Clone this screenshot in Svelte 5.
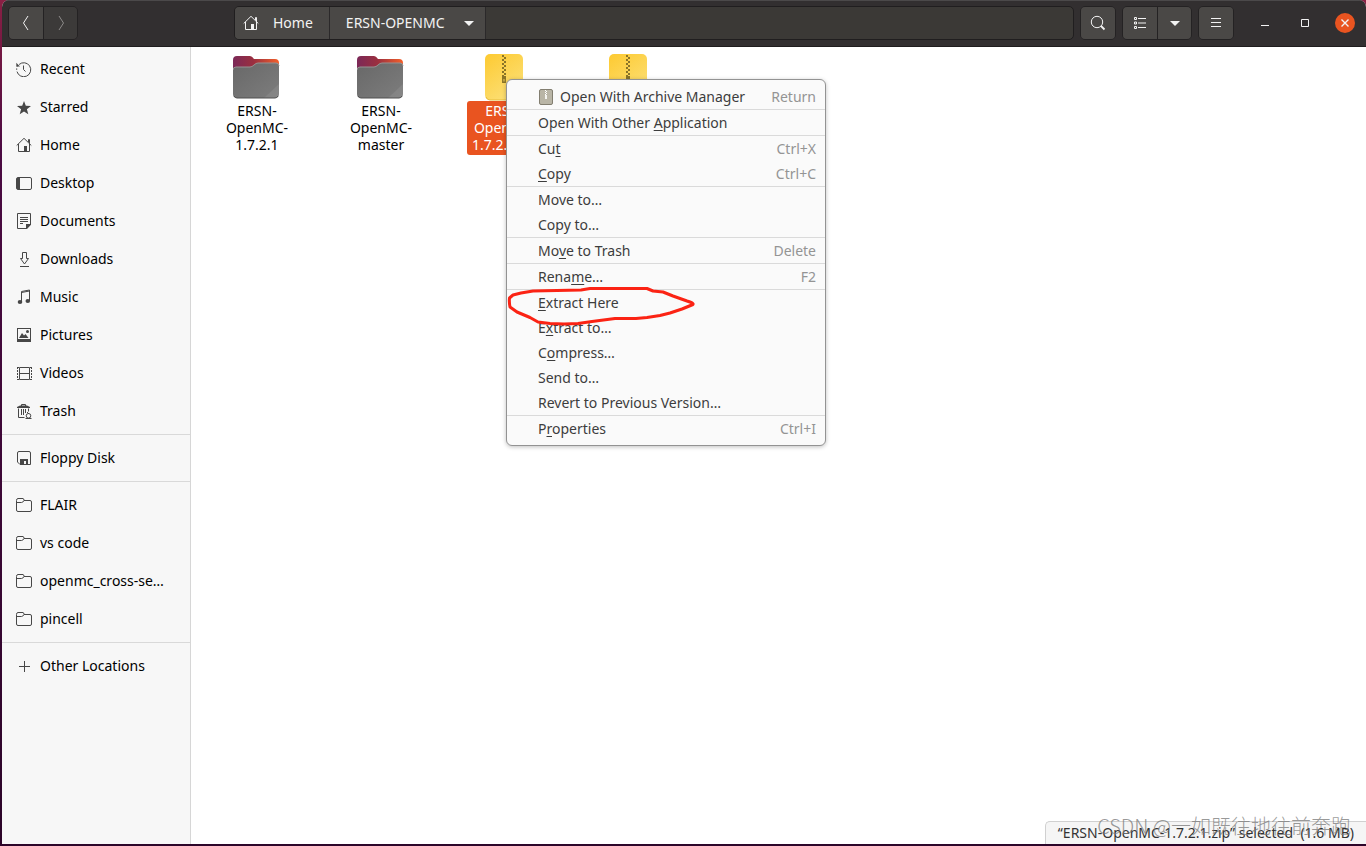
<script lang="ts">
  interface Place {
    label: string;
    icon: string;
  }

  interface FileEntry {
    lines: string[];
    kind: "folder" | "zip";
  }

  interface MenuEntry {
    before: string;
    key?: string;
    after?: string;
    accel?: string;
    icon?: boolean;
  }

  const places: Place[][] = [
    [
      { label: "Recent", icon: "recent" },
      { label: "Starred", icon: "star" },
      { label: "Home", icon: "home" },
      { label: "Desktop", icon: "desktop" },
      { label: "Documents", icon: "document" },
      { label: "Downloads", icon: "download" },
      { label: "Music", icon: "music" },
      { label: "Pictures", icon: "picture" },
      { label: "Videos", icon: "video" },
      { label: "Trash", icon: "trash" },
    ],
    [{ label: "Floppy Disk", icon: "floppy" }],
    [
      { label: "FLAIR", icon: "folder" },
      { label: "vs code", icon: "folder" },
      { label: "openmc_cross-se…", icon: "folder" },
      { label: "pincell", icon: "folder" },
    ],
    [{ label: "Other Locations", icon: "plus" }],
  ];

  const files: FileEntry[] = [
    { lines: ["ERSN-", "OpenMC-", "1.7.2.1"], kind: "folder" },
    { lines: ["ERSN-", "OpenMC-", "master"], kind: "folder" },
    { lines: ["ERSN-", "OpenMC-", "1.7.2.1.zip"], kind: "zip" },
    { lines: [], kind: "zip" },
  ];

  const menu: MenuEntry[][] = [
    [{ before: "Open With Archive Manager", accel: "Return", icon: true }],
    [{ before: "Open With Other ", key: "A", after: "pplication" }],
    [
      { before: "Cu", key: "t", accel: "Ctrl+X" },
      { before: "", key: "C", after: "opy", accel: "Ctrl+C" },
    ],
    [{ before: "Move to…" }, { before: "Copy to…" }],
    [{ before: "Mo", key: "v", after: "e to Trash", accel: "Delete" }],
    [{ before: "Rena", key: "m", after: "e…", accel: "F2" }],
    [
      { before: "", key: "E", after: "xtract Here" },
      { before: "E", key: "x", after: "tract to…" },
      { before: "C", key: "o", after: "mpress…" },
      { before: "Send to…" },
      { before: "Revert to Previous Version…" },
    ],
    [{ before: "P", key: "r", after: "operties", accel: "Ctrl+I" }],
  ];

  let selected = $state(2);
</script>

{#snippet icon(name: string)}
  <svg class="icon" viewBox="0 0 16 16" width="16" height="16" fill="none" stroke="currentColor" aria-hidden="true">
    {#if name === "recent"}
      <path d="M3.1 3.5A7 7 0 1 1 1 10.6" />
      <path d="M.7 8.8V7.4M1.1 5.7l.6-1.2M7.5 4.5v4l2 2" />
      <path d="M.3 1.7v3.8H4z" fill="currentColor" stroke="none" />
    {:else if name === "star"}
      <path d="M8 2l1.8 4.8 5.2.2-4.1 3.2 1.4 5L8 12.4l-4.3 2.8 1.4-5L1 7l5.2-.2z" fill="currentColor" stroke="none" />
    {:else if name === "home"}
      <path d="M.7 8.5L8 1.3l7.3 7.2M2.5 7v7.5h11V7M12.5 5V2.5h1V7" />
      <path d="M8 9h3v5.5H8z" fill="currentColor" stroke="none" />
    {:else if name === "desktop"}
      <rect x=".5" y="2.5" width="15" height="12" rx="1.5" />
      <path d="M1 3h3v11H1z" fill="currentColor" stroke="none" />
    {:else if name === "document"}
      <path d="M1.5.5h13v10.8l-4.2 4.2H1.5zM4 4.5h8M4 6.5h8M4 8.5h8M4 10.5h3" />
      <path d="M15 11v.7L11 16h-1v-5z" fill="currentColor" stroke="none" />
    {:else if name === "download"}
      <path d="M6.5 1.500h4v6h2L8.500 13l-4-5.500h2zM4 15.500h9" />
    {:else if name === "music"}
      <path d="M5.5 13V2.5l8-1.5v11M5.5 3.5l8-1.5" />
      <ellipse cx="4" cy="13" rx="2.3" ry="2" fill="currentColor" stroke="none" />
      <ellipse cx="11.8" cy="12" rx="2.3" ry="2" fill="currentColor" stroke="none" />
    {:else if name === "picture"}
      <rect x="1.5" y="1.5" width="13" height="13" />
      <path d="M1 12h14v3H1zM3 11l3-5 2 2.5L9.5 7l3 4z" fill="currentColor" stroke="none" />
      <circle cx="11.5" cy="4.5" r="1.5" fill="currentColor" stroke="none" />
    {:else if name === "video"}
      <path d="M3.5 2.5h10v12h-10zM3.5 8.5h10" />
      <path d="M1.5 2v13M15.5 2v13" stroke-dasharray="2 1" />
      <path d="M1 2.5h2M14 2.5h2M1 14.5h2M14 14.5h2" />
    {:else if name === "trash"}
      <path d="M5.5 3V1.5h4V3M2.5 5.5v9h6M5.5 6v6M7.5 6v6M9.5 6v4M12.5 5.5v3" />
      <path d="M1 5V4l3-1.5h7L14 4v1z" fill="currentColor" stroke="none" />
      <circle cx="12.5" cy="12.8" r="2.3" />
      <path d="M11 9l2 2M15.5 15.5h-6" />
    {:else if name === "floppy"}
      <path d="M3 1.5h10q1.5 0 1.5 1.5v11.5H4L1.5 12V3q0-1.5 1.5-1.5z" />
      <path d="M4 9h8v6h-2v-4H8v4H4z" fill="currentColor" stroke="none" />
    {:else if name === "folder"}
      <path d="M.5 13V3.5Q.5 1.500 2 1.500h5Q8 1.500 8 3.500h6q1.500 0 1.500 1.500v8q0 1.500-1.500 1.500H2Q.5 14.500.5 13zM.5 5.500h5q1.500 0 2.500-2" />
    {:else if name === "plus"}
      <path d="M8.5 3v11M3 8.5h11" />
    {:else if name === "search"}
      <circle cx="7" cy="7" r="5.7" />
      <path d="M11 11l3.5 3.5" stroke-width="1.8" />
    {:else if name === "list"}
      <path d="M2.5 2.5h2v2h-2zM2.5 7h2v2h-2zM2.5 11.5h2v2h-2zM6 3.5h8M6 8h8M6 12.5h8" />
    {:else if name === "menu"}
      <path d="M3 3.5h10M3 7.5h10M3 11.5h10" />
    {:else if name === "down"}
      <path d="M3 6h10l-5 5z" fill="currentColor" stroke="none" />
    {:else if name === "back"}
      <path d="M10 1L5.5 8l4.5 7" />
    {:else if name === "forward"}
      <path d="M6 1l4.5 7L6 15" />
    {:else if name === "minimize"}
      <path d="M4 10.5h8" />
    {:else if name === "maximize"}
      <path d="M4.5 4.5h7v7h-7z" />
    {:else if name === "close"}
      <path d="M4.5 4.5l7 7M11.5 4.5l-7 7" stroke-width="1.4" />
    {/if}
  </svg>
{/snippet}

<div class="backdrop">
  <div class="window">
    <header class="headerbar">
      <div class="linked">
        <button aria-label="Back">{@render icon("back")}</button>
        <button class="dim" aria-label="Forward" disabled>{@render icon("forward")}</button>
      </div>
      <nav class="pathbar" aria-label="Path">
        <button class="crumb">{@render icon("home")}<span>Home</span></button>
        <button class="crumb current"><span>ERSN-OPENMC</span>{@render icon("down")}</button>
      </nav>
      <div class="tools">
        <div class="linked">
          <button aria-label="Search">{@render icon("search")}</button>
        </div>
        <div class="linked">
          <button aria-label="List view">{@render icon("list")}</button>
          <button aria-label="View options">{@render icon("down")}</button>
        </div>
        <div class="linked">
          <button aria-label="Main menu">{@render icon("menu")}</button>
        </div>
      </div>
      <div class="controls">
        <button aria-label="Minimize">{@render icon("minimize")}</button>
        <button aria-label="Maximize">{@render icon("maximize")}</button>
        <button class="close" aria-label="Close">{@render icon("close")}</button>
      </div>
    </header>

    <div class="body">
      <aside class="sidebar">
        {#each places as group}
          <ul>
            {#each group as place}
              <li>
                <button>{@render icon(place.icon)}<span>{place.label}</span></button>
              </li>
            {/each}
          </ul>
        {/each}
      </aside>

      <main class="files">
        {#each files as file, i}
          <button
            class="file"
            class:selected={selected === i}
            aria-label={file.lines.join("") || "Archive"}
            onclick={() => (selected = i)}
          >
            {#if file.kind === "folder"}
              <svg viewBox="1 0 48 48" width="48" height="48" aria-hidden="true">
                <defs>
                  <linearGradient id="tab{i}">
                    <stop offset="0" stop-color="#7b2958" />
                    <stop offset=".45" stop-color="#9b2f3f" />
                    <stop offset="1" stop-color="#f4602a" />
                  </linearGradient>
                  <linearGradient id="front{i}" x2="1" y2="1">
                    <stop offset="0" stop-color="#686868" />
                    <stop offset="1" stop-color="#7d7d7d" />
                  </linearGradient>
                </defs>
                <path d="M1 7q0-4 4-4h13q2 0 4 3h21q4 0 4 4v14H1z" fill="url(#tab{i})" />
                <path d="M1 17q0-3 3-3h14q2 0 4-2t4-2h18q3 0 3 3v28q0 4-4 4H5q-4 0-4-4z" fill="url(#front{i})" />
                <path d="M1 17q0-3 3-3h14q2 0 4-2t4-2h18q3 0 3 3" fill="none" stroke="#969292" />
                <path d="M47 31v10q0 4-4 4H32z" fill="#fff" opacity=".08" />
                <path d="M2 43q1 2 3 2h38q2 0 3-2" fill="none" stroke="#505050" />
              </svg>
            {:else}
              <svg viewBox="1 0 48 48" width="48" height="48" aria-hidden="true">
                <defs>
                  <linearGradient id="zip{i}" x2=".6" y2="1">
                    <stop offset="0" stop-color="#fdca31" />
                    <stop offset="1" stop-color="#fcdf75" />
                  </linearGradient>
                </defs>
                <rect x="5" y="1" width="38" height="46" rx="5" fill="url(#zip{i})" />
                <path d="M6 44q1 3 4 3h28q3 0 4-3" fill="none" stroke="#e6bd3d" />
                <path d="M23 2v21" fill="none" stroke="#8a7428" stroke-width="2" stroke-dasharray="2 2" />
                <path d="M25 4v19" fill="none" stroke="#8a7428" stroke-width="2" stroke-dasharray="2 2" />
                <path d="M22.8 23.8h2.4v5.4h-2.4z" fill="none" stroke="#8a7428" stroke-width="1.5" />
                <path d="M22 23h4v3h-4z" fill="#8a7428" />
              </svg>
            {/if}
            {#if file.lines.length}
              <span class="name">
                {#each file.lines as line}
                  <span>{line}</span>
                {/each}
              </span>
            {/if}
          </button>
        {/each}
      </main>
    </div>

    <div class="status">“ERSN-OpenMC-1.7.2.1.zip” selected&nbsp; (1.6 MB)</div>

    <div class="context-menu" role="menu">
      {#each menu as group}
        <div class="group">
          {#each group as item}
            <button role="menuitem">
              {#if item.icon}
                <svg class="archive" viewBox="0 0 16 18" width="16" height="18" aria-hidden="true">
                  <rect x="1.5" y="1.5" width="13" height="15" rx="1.5" fill="#b9b5a6" stroke="#827e70" />
                  <path d="M7.5 2v8" stroke="#fff" stroke-dasharray="1 1" />
                  <path d="M8.5 3v7" stroke="#fff" stroke-dasharray="1 1" />
                  <path d="M7 7h2v4H7z" fill="#f4f3ef" />
                </svg>
              {/if}
              <span class="text">{item.before}{#if item.key}<u>{item.key}</u>{/if}{item.after ?? ""}</span>
              {#if item.accel}<span class="accel">{item.accel}</span>{/if}
            </button>
          {/each}
        </div>
      {/each}
      <svg class="marker" viewBox="506 285 192 42" width="192" height="42" aria-hidden="true">
        <path d="M509.500 298L513 295 521 293 533 291 581 290 590 288.500H647L653 291 663 292 673 296 687 301Q694 303 693 304.500L682 309 670 313 660 315.500 647 317.500 636 318.500H615L592 321.500 578 323.500 564 324 550 323.500 538 322 530 317.500 517 312 510 307Q509 302 509.500 298z" />
      </svg>
    </div>

    <div class="watermark">CSDN @一如既往地往前奔跑</div>
  </div>
</div>

<style>
  :global(body) {
    margin: 0;
  }
  .backdrop {
    box-sizing: border-box;
    min-height: 100vh;
    padding: 0 0 2px 2px;
    display: flex;
    background: linear-gradient(#8a2044, #4b0a42 150px, #2c0529);
    font-family: "Noto Sans", "Noto Sans CJK SC", sans-serif;
    font-size: 14px;
  }
  button {
    margin: 0;
    padding: 0;
    border: 0;
    background: none;
    color: inherit;
    font: inherit;
  }
  .icon {
    display: block;
    flex: none;
  }
  .window {
    position: relative;
    flex: 1;
    min-width: 0;
    display: flex;
    flex-direction: column;
    background: #fff;
    border-radius: 7px 7px 0 0;
    overflow: hidden;
  }

  .headerbar {
    box-sizing: border-box;
    height: 47px;
    padding: 0 11px 1px 6px;
    display: flex;
    align-items: center;
    background: #322f30;
    border-top: 1px solid #4b494a;
    border-bottom: 1px solid #1f1d1e;
    color: #f3f3f3;
  }
  .linked {
    display: flex;
    border: 1px solid #242223;
    border-radius: 5px;
    overflow: hidden;
  }
  .linked button {
    width: 34px;
    height: 32px;
    display: flex;
    align-items: center;
    justify-content: center;
    background: #4a4846;
  }
  .linked button + button {
    border-left: 1px solid #242223;
  }
  .linked .dim {
    background: #3c3a39;
    color: #8d8b8a;
  }
  .pathbar {
    flex: 1;
    margin: 0 6px 0 156px;
    height: 32px;
    display: flex;
    background: #3b3936;
    border: 1px solid #201e1f;
    border-radius: 5px;
    overflow: hidden;
  }
  .crumb {
    padding: 0 16px 0 8px;
    display: flex;
    align-items: center;
    gap: 14px;
    background: #4a4846;
    border-right: 1px solid #2b292a;
  }
  .crumb span {
    padding-bottom: 2px;
  }
  .current {
    padding: 0 8px 0 16px;
    gap: 16px;
  }
  .tools {
    display: flex;
    gap: 6px;
  }
  .controls {
    margin-left: 21px;
    display: flex;
    gap: 20px;
  }
  .controls button {
    width: 20px;
    height: 20px;
    display: flex;
    align-items: center;
    justify-content: center;
    border-radius: 50%;
  }
  .controls .close {
    background: #e95420;
  }

  .body {
    flex: 1;
    display: flex;
  }
  .sidebar {
    box-sizing: border-box;
    width: 189px;
    padding-top: 3px;
    background: #f7f7f7;
    border-right: 1px solid #d6d6d6;
    color: #000;
  }
  .sidebar ul {
    margin: 0;
    padding: 0;
    list-style: none;
  }
  .sidebar ul + ul {
    margin-top: 4px;
    padding-top: 4px;
    border-top: 1px solid #d9d9d9;
  }
  .sidebar button {
    width: 100%;
    height: 38px;
    padding-left: 14px;
    display: flex;
    align-items: center;
    gap: 8px;
    white-space: nowrap;
  }
  .sidebar span {
    padding-bottom: 2px;
  }
  .sidebar .icon {
    color: #474747;
  }

  .files {
    flex: 1;
    padding: 6px 0 0 4px;
    display: flex;
    flex-wrap: wrap;
    align-content: flex-start;
  }
  .file {
    width: 124px;
    display: flex;
    flex-direction: column;
    align-items: center;
    align-self: flex-start;
  }
  .name {
    padding: 1px 5px 2px;
    display: flex;
    flex-direction: column;
    border-radius: 3px;
    line-height: 17px;
  }
  .selected .name {
    background: #e95420;
    color: #fff;
  }

  .status {
    position: absolute;
    right: 0;
    bottom: 0;
    padding: 0 12px;
    height: 22px;
    line-height: 22px;
    background: #f5f5f5;
    border: 1px solid #d0d0d0;
    border-width: 1px 0 0 1px;
    border-radius: 5px 0 0 0;
    color: #333;
    white-space: nowrap;
  }
  .context-menu {
    position: absolute;
    left: 504px;
    top: 79px;
    box-sizing: border-box;
    width: 320px;
    padding: 4px 0;
    background: #fafafa;
    border: 1px solid #939393;
    border-radius: 6px;
    box-shadow: 0 1px 4px rgba(0, 0, 0, 0.25);
    color: #3d3d3d;
  }
  .group + .group {
    border-top: 1px solid #dadada;
  }
  .group button {
    width: 100%;
    height: 25px;
    padding: 0 9px 0 31px;
    display: flex;
    align-items: center;
    gap: 6px;
  }
  .text {
    flex: 1;
    text-align: left;
    white-space: pre;
  }
  .accel {
    color: #949494;
  }
  u {
    text-underline-offset: 2px;
  }
  .marker {
    position: absolute;
    left: -1px;
    top: 205px;
    pointer-events: none;
  }
  .marker path {
    fill: none;
    stroke: #fb2314;
    stroke-width: 3;
    stroke-linejoin: round;
  }
  .watermark {
    position: absolute;
    right: 15px;
    bottom: 4px;
    color: rgba(120, 120, 120, 0.75);
    font-family: "Noto Sans CJK SC", sans-serif;
    font-size: 20px;
    line-height: 28px;
    font-weight: 300;
    pointer-events: none;
  }
</style>
